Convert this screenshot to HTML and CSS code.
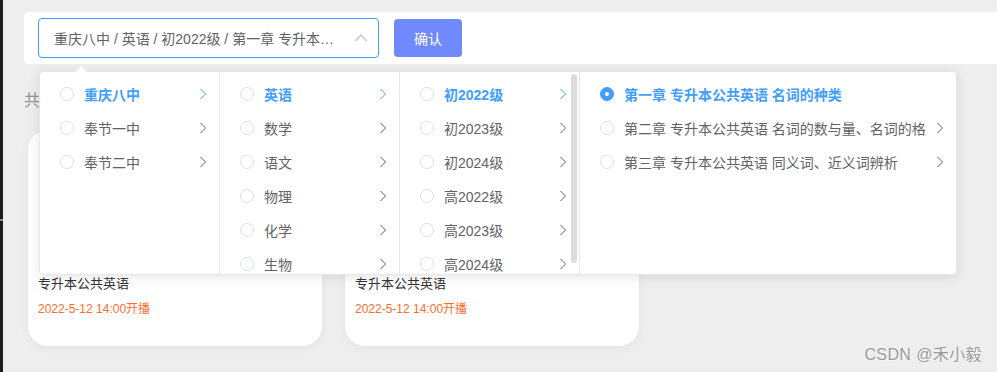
FILE: index.html
```html
<!DOCTYPE html>
<html>
<head>
  <meta charset="utf-8">
  <title>直播课程</title>
  <link rel="stylesheet" href="styles.css">
</head>
<body>

<div class="page">
  <div class="side-strip"></div>

  <div class="main">
    <div class="toolbar">
      <div class="cascader">
        <div class="cascader-input">
          <span class="cascader-text">重庆八中 / 英语 / 初2022级 / 第一章 专升本公共英语 名词的种类</span>
          <svg class="caret-up" width="14" height="8" viewBox="0 0 14 8"><path d="M1 7 L7 1.2 L13 7" fill="none" stroke="#c0c4cc" stroke-width="1.2"/></svg>
        </div>

        <div class="cascader-panel">
          <span class="popper-arrow"></span>

          <ul class="menu">
            <li class="node active"><span class="radio"></span><span class="label">重庆八中</span><svg class="postfix" width="8" height="12" viewBox="0 0 8 12"><path d="M1.5 1 L6.5 6 L1.5 11" fill="none" stroke="currentColor" stroke-width="1"/></svg></li>
            <li class="node"><span class="radio"></span><span class="label">奉节一中</span><svg class="postfix" width="8" height="12" viewBox="0 0 8 12"><path d="M1.5 1 L6.5 6 L1.5 11" fill="none" stroke="currentColor" stroke-width="1"/></svg></li>
            <li class="node"><span class="radio"></span><span class="label">奉节二中</span><svg class="postfix" width="8" height="12" viewBox="0 0 8 12"><path d="M1.5 1 L6.5 6 L1.5 11" fill="none" stroke="currentColor" stroke-width="1"/></svg></li>
          </ul>

          <ul class="menu">
            <li class="node active"><span class="radio"></span><span class="label">英语</span><svg class="postfix" width="8" height="12" viewBox="0 0 8 12"><path d="M1.5 1 L6.5 6 L1.5 11" fill="none" stroke="currentColor" stroke-width="1"/></svg></li>
            <li class="node"><span class="radio"></span><span class="label">数学</span><svg class="postfix" width="8" height="12" viewBox="0 0 8 12"><path d="M1.5 1 L6.5 6 L1.5 11" fill="none" stroke="currentColor" stroke-width="1"/></svg></li>
            <li class="node"><span class="radio"></span><span class="label">语文</span><svg class="postfix" width="8" height="12" viewBox="0 0 8 12"><path d="M1.5 1 L6.5 6 L1.5 11" fill="none" stroke="currentColor" stroke-width="1"/></svg></li>
            <li class="node"><span class="radio"></span><span class="label">物理</span><svg class="postfix" width="8" height="12" viewBox="0 0 8 12"><path d="M1.5 1 L6.5 6 L1.5 11" fill="none" stroke="currentColor" stroke-width="1"/></svg></li>
            <li class="node"><span class="radio"></span><span class="label">化学</span><svg class="postfix" width="8" height="12" viewBox="0 0 8 12"><path d="M1.5 1 L6.5 6 L1.5 11" fill="none" stroke="currentColor" stroke-width="1"/></svg></li>
            <li class="node"><span class="radio"></span><span class="label">生物</span><svg class="postfix" width="8" height="12" viewBox="0 0 8 12"><path d="M1.5 1 L6.5 6 L1.5 11" fill="none" stroke="currentColor" stroke-width="1"/></svg></li>
          </ul>

          <ul class="menu scroll">
            <li class="node active"><span class="radio"></span><span class="label">初2022级</span><svg class="postfix" width="8" height="12" viewBox="0 0 8 12"><path d="M1.5 1 L6.5 6 L1.5 11" fill="none" stroke="currentColor" stroke-width="1"/></svg></li>
            <li class="node"><span class="radio"></span><span class="label">初2023级</span><svg class="postfix" width="8" height="12" viewBox="0 0 8 12"><path d="M1.5 1 L6.5 6 L1.5 11" fill="none" stroke="currentColor" stroke-width="1"/></svg></li>
            <li class="node"><span class="radio"></span><span class="label">初2024级</span><svg class="postfix" width="8" height="12" viewBox="0 0 8 12"><path d="M1.5 1 L6.5 6 L1.5 11" fill="none" stroke="currentColor" stroke-width="1"/></svg></li>
            <li class="node"><span class="radio"></span><span class="label">高2022级</span><svg class="postfix" width="8" height="12" viewBox="0 0 8 12"><path d="M1.5 1 L6.5 6 L1.5 11" fill="none" stroke="currentColor" stroke-width="1"/></svg></li>
            <li class="node"><span class="radio"></span><span class="label">高2023级</span><svg class="postfix" width="8" height="12" viewBox="0 0 8 12"><path d="M1.5 1 L6.5 6 L1.5 11" fill="none" stroke="currentColor" stroke-width="1"/></svg></li>
            <li class="node"><span class="radio"></span><span class="label">高2024级</span><svg class="postfix" width="8" height="12" viewBox="0 0 8 12"><path d="M1.5 1 L6.5 6 L1.5 11" fill="none" stroke="currentColor" stroke-width="1"/></svg></li>
            <li class="node"><span class="radio"></span><span class="label">高2025级</span><svg class="postfix" width="8" height="12" viewBox="0 0 8 12"><path d="M1.5 1 L6.5 6 L1.5 11" fill="none" stroke="currentColor" stroke-width="1"/></svg></li>
            <span class="scroll-thumb"></span>
          </ul>

          <ul class="menu wide">
            <li class="node active"><span class="radio checked"></span><span class="label">第一章 专升本公共英语 名词的种类</span></li>
            <li class="node"><span class="radio"></span><span class="label">第二章 专升本公共英语 名词的数与量、名词的格</span><svg class="postfix" width="8" height="12" viewBox="0 0 8 12"><path d="M1.5 1 L6.5 6 L1.5 11" fill="none" stroke="currentColor" stroke-width="1"/></svg></li>
            <li class="node"><span class="radio"></span><span class="label">第三章 专升本公共英语 同义词、近义词辨析</span><svg class="postfix" width="8" height="12" viewBox="0 0 8 12"><path d="M1.5 1 L6.5 6 L1.5 11" fill="none" stroke="currentColor" stroke-width="1"/></svg></li>
          </ul>
        </div>
      </div>

      <button class="confirm">确认</button>
    </div>

    <div class="total">共2场直播</div>

    <div class="cards">
      <div class="card">
        <div class="card-cover"></div>
        <div class="card-title">专升本公共英语</div>
        <div class="card-time">2022-5-12 14:00开播</div>
      </div>
      <div class="card">
        <div class="card-cover"></div>
        <div class="card-title">专升本公共英语</div>
        <div class="card-time">2022-5-12 14:00开播</div>
      </div>
    </div>
  </div>
</div>

<div class="watermark">CSDN @禾小毅</div>

</body>
</html>
```

FILE: styles.css
```css
body {
  margin: 0;
  background: #eeeeee;
  font-family: "Liberation Sans", "Noto Sans CJK SC", sans-serif;
  color: #606266;
  height: 372px;
  overflow: hidden;
}

.page {
  display: flex;
  height: 372px;
}

.side-strip {
  width: 3px;
  flex-shrink: 0;
  background: linear-gradient(to bottom, #1c1c1c 0, #1c1c1c 219px, #8a8a8a 219px, #8a8a8a 221px, #1c1c1c 221px);
}

.main {
  flex: 1;
  padding-left: 21px;
}

.toolbar {
  margin-top: 12px;
  height: 52px;
  background: #fff;
  border-radius: 4px 0 0 4px;
  display: flex;
  align-items: center;
  padding-left: 14px;
  box-sizing: border-box;
}

.cascader {
  position: relative;
}

.cascader-input {
  width: 341px;
  height: 40px;
  box-sizing: border-box;
  border: 1px solid #409eff;
  border-radius: 4px;
  display: flex;
  align-items: center;
  padding: 0 10px 0 15px;
  background: #fff;
}

.cascader-text {
  flex: 1;
  font-size: 14px;
  color: #606266;
  white-space: nowrap;
  overflow: hidden;
  text-overflow: ellipsis;
  margin-right: 12px;
}

.caret-up {
  flex-shrink: 0;
}

.confirm {
  margin-left: 15px;
  width: 68px;
  height: 38px;
  border: none;
  border-radius: 4px;
  background: #7189ff;
  color: #fff;
  font-family: "Liberation Sans", "Noto Sans CJK SC", sans-serif;
  font-size: 14px;
}

.cascader-panel {
  position: absolute;
  left: 1px;
  top: 53px;
  z-index: 10;
  display: flex;
  background: #fff;
  border: 1px solid #e4e7ed;
  border-radius: 4px;
  box-shadow: 0 2px 12px rgba(0, 0, 0, 0.1);
}

.popper-arrow {
  position: absolute;
  top: -6px;
  left: 35px;
  width: 0;
  height: 0;
  border-left: 6px solid transparent;
  border-right: 6px solid transparent;
  border-bottom: 6px solid #fff;
  filter: drop-shadow(0 -1px 0 #e4e7ed);
}

.menu {
  list-style: none;
  margin: 0;
  padding: 5px 0;
  width: 180px;
  height: 202px;
  box-sizing: border-box;
  border-right: 1px solid #e4e7ed;
  overflow: hidden;
  position: relative;
}

.menu.wide {
  width: 376px;
  border-right: none;
}

.node {
  position: relative;
  display: flex;
  align-items: center;
  height: 34px;
  padding: 0 30px 0 20px;
  font-size: 14px;
  color: #606266;
  white-space: nowrap;
}

.node.active {
  color: #409eff;
  font-weight: bold;
}

.radio {
  width: 14px;
  height: 14px;
  box-sizing: border-box;
  border: 1px solid #dcdfe6;
  border-radius: 50%;
  background: #fff;
  margin-right: 10px;
  flex-shrink: 0;
  position: relative;
}

.radio.checked {
  background: #409eff;
  border-color: #409eff;
}

.radio.checked::after {
  content: "";
  position: absolute;
  left: 50%;
  top: 50%;
  width: 4px;
  height: 4px;
  margin: -2px 0 0 -2px;
  border-radius: 50%;
  background: #fff;
}

.label {
  overflow: hidden;
}

.postfix {
  position: absolute;
  right: 12px;
  top: 11px;
}

.scroll-thumb {
  position: absolute;
  right: 2px;
  top: 2px;
  width: 6px;
  height: 189px;
  border-radius: 3px;
  background: #dcdcdd;
}

.total {
  margin-top: 26px;
  font-size: 16px;
  color: #909399;
  line-height: 22px;
}

.cards {
  display: flex;
  gap: 23px;
  margin-top: 18px;
  padding-left: 4px;
}

.card {
  width: 294px;
  height: 216px;
  background: #fff;
  border-radius: 20px;
  box-shadow: 0 2px 10px rgba(0, 0, 0, 0.05);
  padding: 0 10px;
  box-sizing: border-box;
}

.card-cover {
  height: 144px;
}

.card-title {
  font-size: 13px;
  color: #333;
  line-height: 20px;
}

.card-time {
  margin-top: 5px;
  font-size: 12px;
  color: #ff6d2d;
  line-height: 20px;
}

.watermark {
  position: absolute;
  right: 15px;
  bottom: 7px;
  font-size: 16px;
  letter-spacing: 0.4px;
  color: #9a9a9a;
  text-shadow: 0 0 2px #fff;
}
```
